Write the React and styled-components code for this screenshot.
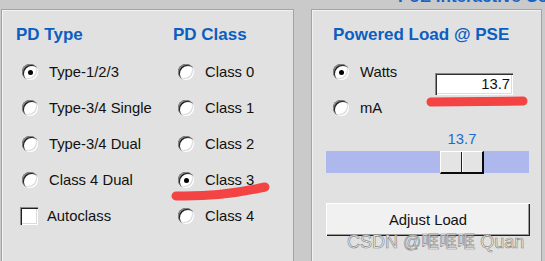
import styled, { createGlobalStyle } from "styled-components";

const GlobalStyle = createGlobalStyle`
  html, body {
    margin: 0;
    padding: 0;
    background: #cacaca;
    overflow: hidden;
  }
  body {
    font-family: "Liberation Sans", Arial, sans-serif;
  }
`;

const Screen = styled.div`
  position: relative;
  width: 545px;
  height: 261px;
  overflow: hidden;
  background: #cacaca;
`;

const TopStrip = styled.div`
  height: 9px;
  overflow: hidden;
  padding-left: 398px;
`;

const CutTitle = styled.div`
  margin-top: -12px;
  font-size: 17px;
  line-height: 17px;
  font-weight: bold;
  color: #1565c8;
  white-space: nowrap;
`;

const Panels = styled.div`
  display: flex;
  gap: 17px;
  padding-left: 1px;
`;

const Panel = styled.div`
  box-sizing: border-box;
  width: ${(p) => p.$width}px;
  height: 300px;
  background: #e1e1e1;
  border: 1px solid #a4a4a4;
  box-shadow: inset 1px 1px 0 #f2f2f2;
  padding: 15px 0 0 ${(p) => p.$pad}px;
`;

const ClassGrid = styled.div`
  display: grid;
  grid-template-columns: 157px 1fr;
  grid-template-rows: 29px repeat(5, 36px);
  grid-auto-flow: column;
`;

const Heading = styled.div`
  font-size: 17px;
  line-height: 20px;
  font-weight: bold;
  color: #0b5ec2;
  white-space: nowrap;
`;

const GridHeading = styled(Heading)`
  align-self: start;
`;

const Option = styled.label`
  display: flex;
  align-items: center;
  gap: ${(p) => (p.$gap ? p.$gap : 11)}px;
  padding-left: ${(p) => (p.$indent != null ? p.$indent : 6)}px;
  height: 36px;
  font-size: 14.8px;
  color: #111;
  white-space: nowrap;
`;

const Radio = styled.span`
  position: relative;
  flex: none;
  width: 16px;
  height: 16px;
  border-radius: 50%;
  background: #fff;
  box-shadow: inset 1px 1px 0 #8a8a8a, inset 2px 2px 0 #202020,
    inset -1px -1px 0 #ffffff, inset -2px -2px 0 #dadada;
  &::after {
    content: "";
    display: ${(p) => (p.$checked ? "block" : "none")};
    position: absolute;
    left: 5.5px;
    top: 5.5px;
    width: 5px;
    height: 5px;
    border-radius: 50%;
    background: #000;
  }
`;

const Checkbox = styled.span`
  flex: none;
  box-sizing: border-box;
  width: 18px;
  height: 18px;
  margin-left: -2px;
  background: #fff;
  box-shadow: inset 1px 1px 0 #8a8a8a, inset 2px 2px 0 #202020,
    inset -1px -1px 0 #ffffff, inset -2px -2px 0 #dadada;
`;

const LoadRow = styled.div`
  display: flex;
  align-items: flex-start;
  margin-top: 9px;
`;

const UnitColumn = styled.div`
  width: 102px;
  display: flex;
  flex-direction: column;
`;

const ValueInput = styled.div`
  box-sizing: border-box;
  width: 78px;
  height: 22px;
  margin-top: 19px;
  padding: 2px 3px 0 0;
  background: #fff;
  box-shadow: inset 1px 1px 0 #8a8a8a, inset 2px 2px 0 #303030,
    inset -1px -1px 0 #ffffff, inset -2px -2px 0 #dcdcdc;
  text-align: right;
  font-size: 14.8px;
  line-height: 18px;
  color: #111;
`;

const SliderBlock = styled.div`
  margin-left: -7px;
  width: 203px;
`;

const SliderValue = styled.div`
  width: 44px;
  margin-top: 4px;
  text-align: center;
  font-size: 14.8px;
  line-height: 18px;
  color: #1a6ccf;
`;

const Track = styled.div`
  position: relative;
  margin-top: 3px;
  height: 22px;
  background: #aeb8ec;
`;

const Thumb = styled.div`
  position: absolute;
  top: 0;
  box-sizing: border-box;
  width: 44px;
  height: 23px;
  display: flex;
  background: #e4e4e4;
  border-top: 1px solid #ffffff;
  border-left: 1px solid #ffffff;
  border-right: 2px solid #0a0a0a;
  border-bottom: 2px solid #0a0a0a;
`;

const ThumbHalf = styled.div`
  flex: 1;
  & + & {
    border-left: 1px solid #202020;
    box-shadow: inset 1px 0 0 #ffffff;
  }
`;

const Button = styled.button`
  display: block;
  box-sizing: border-box;
  width: 204px;
  height: 33px;
  margin: 30px 0 0 -7px;
  padding: 0;
  background: #f1f1f1;
  border: none;
  box-shadow: inset 1px 1px 0 #ffffff, inset -1px -1px 0 #202020,
    inset -2px -2px 0 #9a9a9a;
  font-family: "Liberation Sans", Arial, sans-serif;
  font-size: 14.8px;
  color: #111;
`;

const Watermark = styled.div`
  position: absolute;
  left: 347px;
  top: 232px;
  font-family: "Liberation Sans", "Noto Sans CJK SC", sans-serif;
  font-size: 18px;
  line-height: 20px;
  color: #f6f6f6;
  -webkit-text-stroke: 0.7px #8c8c8c;
  white-space: nowrap;
  pointer-events: none;
`;

const Marks = styled.svg`
  position: absolute;
  left: 0;
  top: 0;
  pointer-events: none;
`;

const pdTypes = [
  { label: "Type-1/2/3", checked: true },
  { label: "Type-3/4 Single" },
  { label: "Type-3/4 Dual" },
  { label: "Class 4 Dual" },
];

const pdClasses = ["Class 0", "Class 1", "Class 2", "Class 3", "Class 4"];
const selectedClass = "Class 3";

const load = 13.7;
const loadMax = 19.1;
const trackWidth = 203;
const thumbWidth = 44;

export default function App() {
  const thumbLeft = Math.round((load / loadMax) * (trackWidth - thumbWidth));

  return (
    <Screen>
      <GlobalStyle />
      <TopStrip>
        <CutTitle>PoE Interactive Control</CutTitle>
      </TopStrip>
      <Panels>
        <Panel $width={293} $pad={14}>
          <ClassGrid>
            <GridHeading>PD Type</GridHeading>
            {pdTypes.map((t) => (
              <Option key={t.label}>
                <Radio $checked={t.checked} />
                {t.label}
              </Option>
            ))}
            <Option $gap={9}>
              <Checkbox />
              Autoclass
            </Option>
            <GridHeading>PD Class</GridHeading>
            {pdClasses.map((c) => (
              <Option key={c} $indent={5}>
                <Radio $checked={c === selectedClass} />
                {c}
              </Option>
            ))}
          </ClassGrid>
        </Panel>
        <Panel $width={231} $pad={21}>
          <Heading>Powered Load @ PSE</Heading>
          <LoadRow>
            <UnitColumn>
              <Option $indent={0}>
                <Radio $checked />
                Watts
              </Option>
              <Option $indent={0}>
                <Radio />
                mA
              </Option>
            </UnitColumn>
            <ValueInput>{load}</ValueInput>
          </LoadRow>
          <SliderBlock>
            <SliderValue style={{ marginLeft: thumbLeft }}>{load}</SliderValue>
            <Track>
              <Thumb style={{ left: thumbLeft }}>
                <ThumbHalf />
                <ThumbHalf />
              </Thumb>
            </Track>
          </SliderBlock>
          <Button>Adjust Load</Button>
        </Panel>
      </Panels>
      <Watermark>CSDN @哐哐哐 Quan</Watermark>
      <Marks width="545" height="261" viewBox="0 0 545 261">
        <path
          d="M176 196 Q 222 197 265 187"
          fill="none"
          stroke="#f34343"
          strokeWidth="9"
          strokeLinecap="round"
        />
        <path
          d="M431 102 L 523 101"
          fill="none"
          stroke="#f34343"
          strokeWidth="9"
          strokeLinecap="round"
        />
      </Marks>
    </Screen>
  );
}
